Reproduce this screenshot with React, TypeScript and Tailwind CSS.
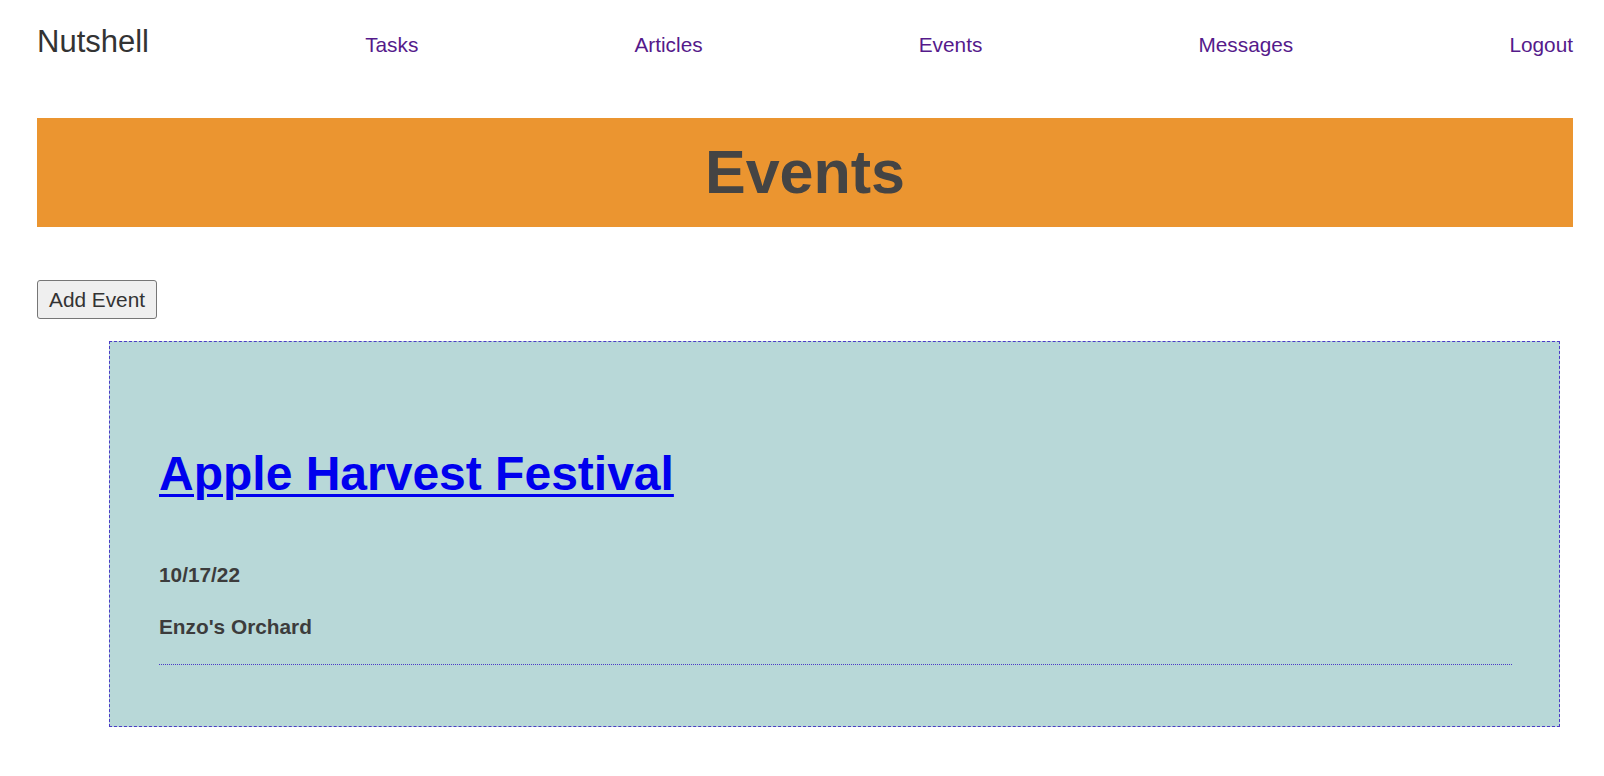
import React from "react";

const NAV_LINKS = ["Tasks", "Articles", "Events", "Messages", "Logout"];

// Single event card shown under the "Add Event" button
function EventCard() {
  return (
    <section className="mt-[22px] ml-[72px] mr-[13px] h-[386px] border border-dashed border-[#4b3cc6] bg-[#b8d8d8] pl-[49px] pr-[47px] pt-[104px]">
      <h2 className="text-[48px] leading-[56px] font-bold">
        <a href="#" className="text-[#0000ee] underline decoration-[3px] underline-offset-[4px]">
          Apple Harvest Festival
        </a>
      </h2>
      <p className="mt-[61px] text-[20.8px] leading-[24px] font-bold text-[#3c3c3c]">10/17/22</p>
      <p className="mt-[28px] text-[20.8px] leading-[24px] font-bold text-[#3c3c3c]">Enzo's Orchard</p>
      <hr className="mt-[25px] border-0 border-t border-dotted border-[#4b3cc6]" />
    </section>
  );
}

export default function App() {
  return (
    <div className="min-h-screen bg-white pl-[37px] pr-[31px] font-['Liberation_Sans',Arial,sans-serif]">
      {/* ------------------------------------------------------------------ */}
      {/* Top navigation                                                      */}
      {/* ------------------------------------------------------------------ */}
      <nav className="flex items-baseline justify-between pt-[24px]">
        <span className="text-[31px] leading-[36px] text-[#333]">Nutshell</span>
        {NAV_LINKS.map((label) => (
          <a key={label} href="#" className="text-[20.8px] leading-[24px] text-[#551a8b]">
            {label}
          </a>
        ))}
      </nav>

      {/* Page banner */}
      <header className="mt-[58px] h-[109px] bg-[#eb9530] pt-[24px] text-center">
        <h1 className="text-[61px] leading-none font-bold text-[#444]">Events</h1>
      </header>

      <button
        type="button"
        className="mt-[53px] flex h-[39px] w-[120px] items-center justify-center rounded-[3px] border border-[#767676] bg-[#efefef] text-[20.8px] text-[#333]"
      >
        Add Event
      </button>

      <EventCard />
    </div>
  );
}
